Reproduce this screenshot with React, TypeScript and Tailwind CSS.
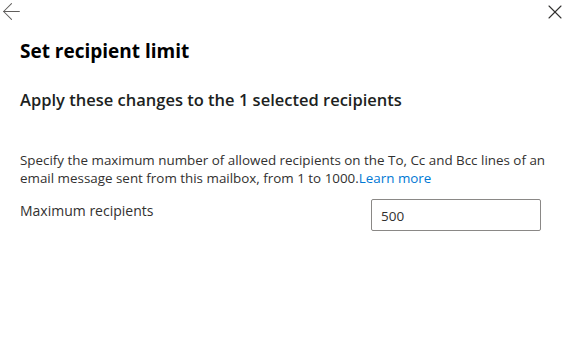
import { ArrowLeft, X } from "lucide-react"

export default function App() {
  return (
    <div className="relative h-[349px] w-[577px] bg-white text-[#323130] font-['Open_Sans',sans-serif]">
      <div className="flex h-[24px] items-start justify-between pr-[10px]">
        <ArrowLeft className="ml-[-2px] mt-[-2px] h-[27px] w-[27px] text-[#605e5c]" strokeWidth={0.9} />
        <X className="mt-0 h-[24px] w-[24px] text-[#323130]" strokeWidth={1.1} />
      </div>
      <div className="px-[20px]">
        <h1 className="mt-[15px] text-[19px] font-bold leading-[24px] text-black">Set recipient limit</h1>
        <h2 className="mt-[26px] text-[16.5px] font-semibold leading-[22px] text-[#201f1e]">
          Apply these changes to the 1 selected recipients
        </h2>
        <p className="mt-[40px] text-[13.4px] leading-[18px]">
          Specify the maximum number of allowed recipients on the To, Cc and Bcc lines of an email message sent from
          this mailbox, from 1 to 1000.<a className="text-[#0078d4]">Learn more</a>
        </p>
        <div className="mt-[12px] flex items-start justify-between pr-[16px]">
          <label className="mt-[2px] text-[14px] leading-[20px]">Maximum recipients</label>
          <div className="flex h-[32px] w-[170px] items-center rounded-[2px] border border-[#8a8886] px-[9px] pt-[2px] text-[13.5px]">
            500
          </div>
        </div>
      </div>
    </div>
  )
}
